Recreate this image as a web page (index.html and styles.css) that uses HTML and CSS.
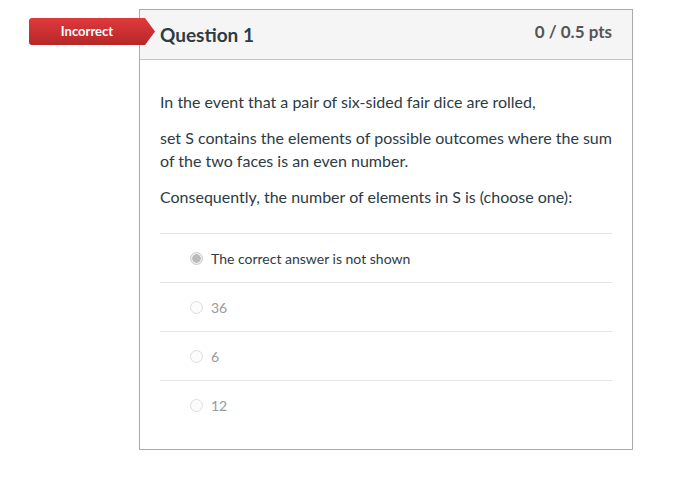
FILE: index.html
```html
<!DOCTYPE html>
<html>
<head>
    <meta charset="UTF-8">
    <meta name="viewport" content="width=device-width, initial-scale=1.0">
    <title>Question 1</title>
    <link rel="stylesheet" href="styles.css">
</head>
<body>
    <div class="quiz">
        <div class="badge">Incorrect</div>
        <div class="question">
            <div class="question-header">
                <span class="question-name">Question 1</span>
                <span class="points">0 / 0.5 pts</span>
            </div>
            <div class="question-body">
                <p>In the event that a pair of six-sided fair dice are rolled,</p>
                <p>set S contains the elements of possible outcomes where the sum of the two faces is an even number.</p>
                <p>Consequently, the number of elements in S is (choose one):</p>
                <div class="answers">
                    <div class="answer selected"><span class="radio"></span>The correct answer is not shown</div>
                    <div class="answer"><span class="radio"></span>36</div>
                    <div class="answer"><span class="radio"></span>6</div>
                    <div class="answer"><span class="radio"></span>12</div>
                </div>
            </div>
        </div>
    </div>
</body>
</html>
```

FILE: styles.css
```css
body {
    margin: 0;
    font-family: Lato, "Liberation Sans", sans-serif;
    color: #2d3b45;
    background: #fff;
}
.quiz {
    position: relative;
    padding: 9px 0 0 139px;
}
.badge {
    position: absolute;
    left: 29px;
    top: 18px;
    width: 126px;
    height: 27px;
    box-sizing: border-box;
    padding-right: 10px;
    text-align: center;
    line-height: 27px;
    font-size: 13px;
    font-weight: bold;
    color: #fff;
    background: linear-gradient(#e0393d, #b62727);
    border-radius: 3px 0 0 3px;
    clip-path: polygon(0 0, 116px 0, 126px 50%, 116px 100%, 0 100%);
    z-index: 2;
}
.question {
    width: 494px;
    box-sizing: border-box;
    border: 1px solid #aaa;
}
.question-header {
    display: flex;
    justify-content: space-between;
    align-items: center;
    height: 50px;
    box-sizing: border-box;
    padding: 0 20px;
    background: #f5f5f5;
    border-bottom: 1px solid #c4c4c4;
}
.question-name {
    font-size: 19px;
    font-weight: bold;
    padding-bottom: 1px;
}
.points {
    font-size: 17px;
    font-weight: bold;
    color: #555;
    padding-bottom: 7px;
}
.question-body {
    padding: 30px 20px 20px;
}
.question-body p {
    margin: 0 0 13px;
    font-size: 16px;
    line-height: 23px;
}
.answers {
    margin-top: 25px;
}
.answer {
    display: flex;
    align-items: center;
    height: 48px;
    border-top: 1px solid #e6e6e6;
    padding-left: 30px;
    font-size: 14px;
    color: #999;
}
.answer.selected {
    color: #2d3b45;
}
.radio {
    width: 11px;
    height: 11px;
    border: 1px solid #ddd;
    border-radius: 50%;
    margin-right: 8px;
    box-sizing: content-box;
    background: #fbfbfb;
}
.answer.selected .radio {
    background: radial-gradient(circle, #bbb 0, #bbb 4px, #eee 4.5px);
    border-color: #ccc;
}
```
